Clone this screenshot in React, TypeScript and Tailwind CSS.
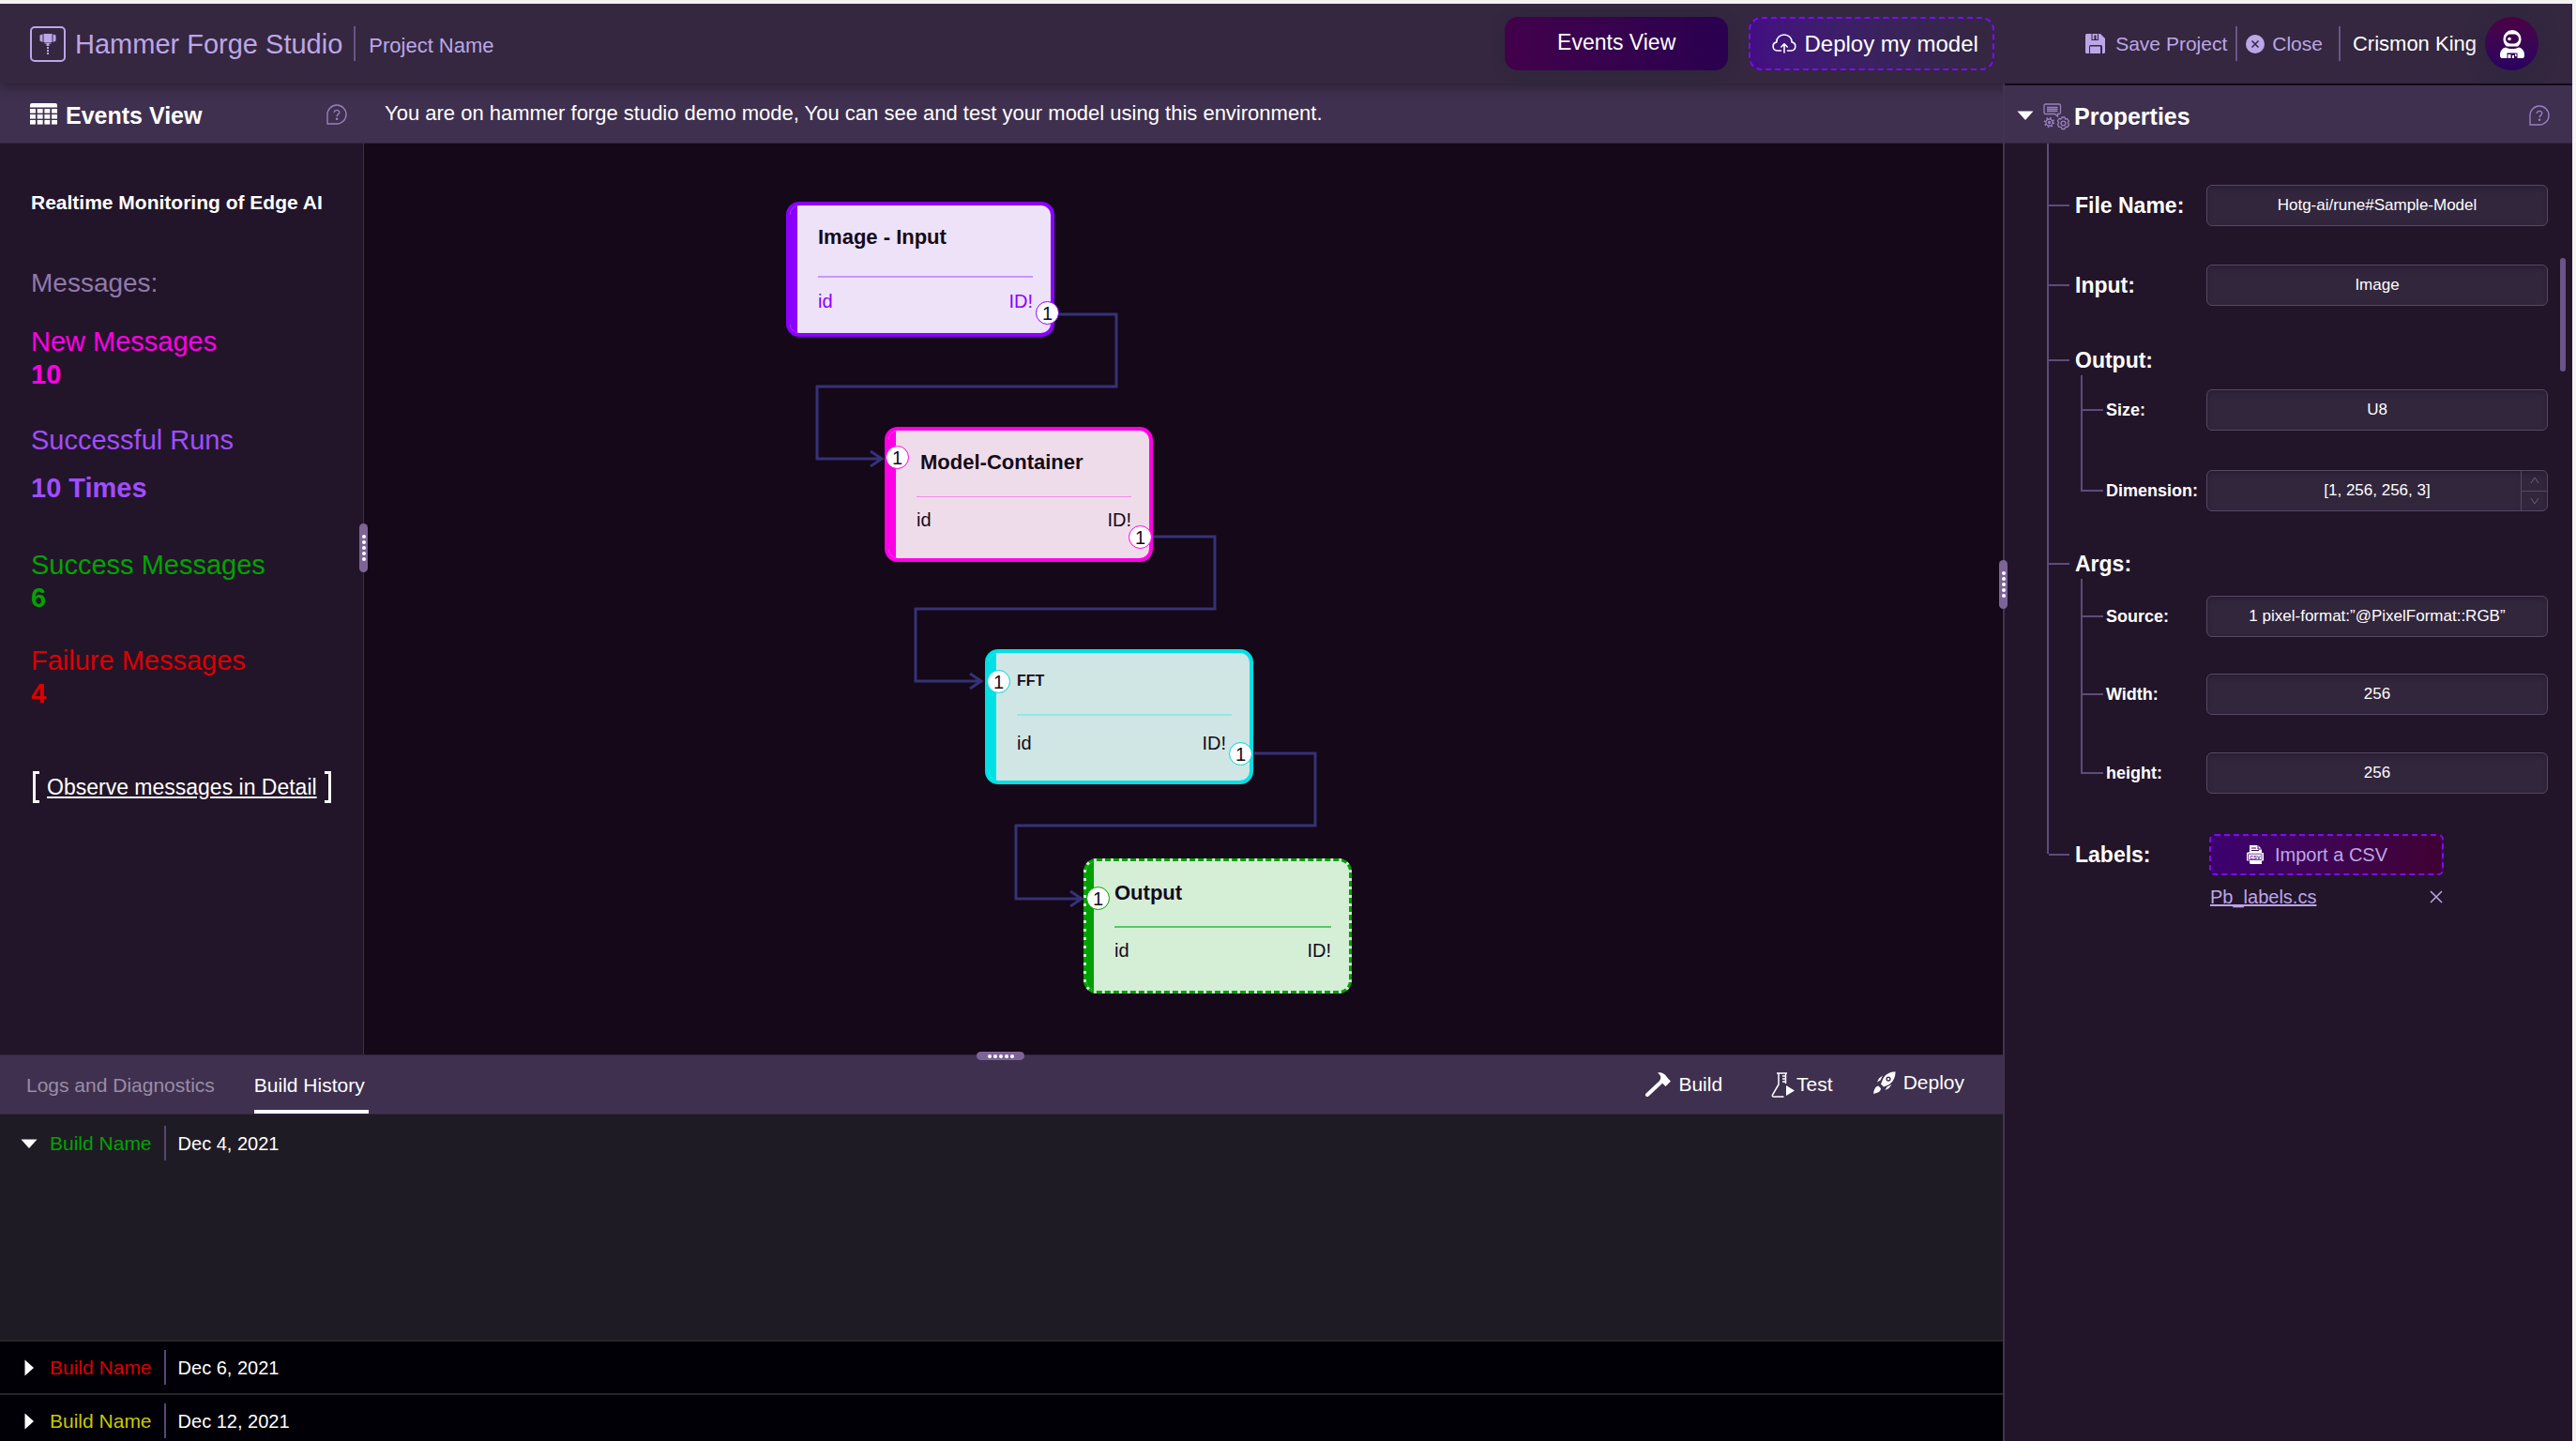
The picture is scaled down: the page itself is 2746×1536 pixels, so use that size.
import type { ReactNode } from 'react';
import clsx from 'clsx';

interface Stat {
  name: string;
  value: string;
  className: string;
  valueClass?: string;
}

const stats: Stat[] = [
  { name: 'New Messages', value: '10', className: 'mt-[28px] text-[#ff00e6]' },
  { name: 'Successful Runs', value: '10 Times', className: 'mt-[35px] text-[#a04dff]', valueClass: 'mt-4' },
  { name: 'Success Messages', value: '6', className: 'mt-[47px] text-[#00a300]' },
  { name: 'Failure Messages', value: '4', className: 'mt-[32px] text-[#dc0000]' },
];

interface FlowNode {
  title: string;
  position: string;
  card: string;
  band: string;
  header: string;
  line: string;
  row: string;
  ports: string[];
}

const nodes: FlowNode[] = [
  {
    title: 'Image - Input',
    position: 'left-[450px] top-[62px]',
    card: 'border-4 border-[#8c00ff] bg-[#ede2f8]',
    band: 'bg-[#8c00ff]',
    header: 'h-[75px] pt-5 text-[22px]',
    line: 'h-0.5 bg-[#c896ff]',
    row: 'mt-[11px] text-[#8c00ff]',
    ports: ['left-[266px] top-[106px] border-[#8c00ff]'],
  },
  {
    title: 'Model-Container',
    position: 'left-[555px] top-[302px]',
    card: 'border-4 border-[#ff00e6] bg-[#eedcea]',
    band: 'bg-[#ff00e6]',
    header: 'h-[70px] pt-5 pl-1 text-[22px]',
    line: 'h-px bg-[#f78be8]',
    row: 'mt-[10px]',
    ports: ['left-px top-5 border-[#ff00e6]', 'left-[260px] top-[105px] border-[#ff00e6]'],
  },
  {
    title: 'FFT',
    position: 'left-[662px] top-[539px]',
    card: 'border-4 border-[#00e1e6] bg-[#d0e6e4]',
    band: 'bg-[#00e1e6]',
    header: 'h-[65px] pt-4 text-[16px]',
    line: 'h-0.5 bg-[#8fe8e8]',
    row: 'mt-[15px] pr-1.5',
    ports: ['left-0.5 top-[22px] border-[#00d5da]', 'left-[260px] top-[99px] border-[#00d5da]'],
  },
  {
    title: 'Output',
    position: 'left-[767px] top-[762px]',
    card: 'border-3 border-dashed border-[#00a000] bg-[#d5eed6]',
    band: 'bg-[#00a000]',
    header: 'h-[69px] pt-5 text-[22px]',
    line: 'h-0.5 bg-[#5cc46c]',
    row: 'mt-[10px]',
    ports: ['left-[3px] top-[30px] border-[#00a000]'],
  },
];

const edges = [
  'M741 182H802V259H483V336H552M540 328L552 336L540 344',
  'M841 419H907V496H588V573H658M646 565L658 573L646 581',
  'M949 650H1014V727H695V805H765M753 797L765 805L753 813',
];

const builds = [
  { date: 'Dec 4, 2021', color: 'text-[#00a300]', open: true },
  { date: 'Dec 6, 2021', color: 'text-[#dc0000]', open: false },
  { date: 'Dec 12, 2021', color: 'text-[#c8c800]', open: false },
];

const LogoIcon = () => (
  <svg viewBox="0 0 38 38" className="size-[38px] shrink-0" fill="none" stroke="#bca6e8">
    <rect x="1" y="1" width="36" height="36" rx="4" strokeWidth="2" />
    <g fill="#bca6e8" stroke="none">
      <rect x="14.5" y="8" width="9" height="9" />
      <path d="M13.5 8.5v8.500l-3-1.500V9.500zM24.500 8.500v8.500l3-1.500V9.500z" />
      <path d="M15.500 17.500h7v1h-7zM17.500 18.500h3v2.500h-3zM18 22h2v2h-2zM18 25h2v2h-2zM18 28h2v2h-2z" />
    </g>
  </svg>
);

const GridIcon = () => (
  <svg viewBox="0 0 29 23" className="h-[23px] w-[29px] shrink-0" fill="#fff">
    <path d="M2 0h25a2 2 0 0 1 2 2v2.500H0V2a2 2 0 0 1 2-2z" />
    {[6, 12, 18].map((y) => [0, 7.7, 15.4, 23.1].map((x) => <rect key={`${x}-${y}`} x={x} y={y} width="5.9" height="4.6" />))}
  </svg>
);

const HelpButton = () => (
  <button type="button" aria-label="Help" className="ml-auto shrink-0">
    <svg viewBox="0 0 22 22" className="size-[22px]" fill="none" stroke="#9b7fc0" strokeWidth="1.4">
      <path d="M1 21V11A10 10 0 1 1 11 21z" strokeLinejoin="round" />
      <path d="M8.300 9c0-3.600 5.600-3.400 5.400 0c-.1 1.900-2.600 2-2.600 4.200" />
      <circle cx="11.1" cy="15.8" r=".6" fill="#9b7fc0" />
    </svg>
  </button>
);

const CloudIcon = () => (
  <svg viewBox="0 0 26 21" className="h-[21px] w-[26px]" fill="none" stroke="#fff" strokeWidth="1.6" strokeLinecap="round" strokeLinejoin="round">
    <path d="M9.500 18H5.500a4.600 4.600 0 0 1-.7-9.100C4.800 4.500 8.200 1 12.900 1s8.200 3.500 8.200 7.900A4.600 4.600 0 0 1 20.500 18h-4" />
    <path d="M13 20v-9M9.800 14L13 10.800L16.200 14" />
  </svg>
);

const SaveIcon = () => (
  <svg viewBox="0 0 21 21" className="size-[21px]" fill="#bca6e8">
    <path fillRule="evenodd" d="M1.500 0H6.500V7H14V0H16L21 5V19.500A1.500 1.500 0 0 1 19.500 21H18V13.500A1.500 1.500 0 0 0 16.500 12H5.500A1.500 1.500 0 0 0 4 13.500V21H1.500A1.500 1.500 0 0 1 0 19.500V1.500A1.500 1.500 0 0 1 1.500 0z" />
    <path d="M7.500 0H13V6H11.500V1.500H9.500V6H7.500zM5 13.500H16V21H5z" />
  </svg>
);

const CloseIcon = () => (
  <svg viewBox="0 0 20 20" className="size-5">
    <circle cx="10" cy="10" r="10" fill="#bca6e8" />
    <path d="M6.500 6.500l7 7M13.500 6.500l-7 7" stroke="#34273f" strokeWidth="1.5" />
  </svg>
);

const AvatarIcon = () => (
  <svg viewBox="0 0 26 30" className="h-[30px] w-[26px]" fill="#fff">
    <path fillRule="evenodd" d="M13 0a9.500 9.500 0 0 1 9.500 10c0 3-1.500 5.500-3.500 7.500H7C5 15.500 3.500 13 3.500 10A9.500 9.500 0 0 1 13 0zM11 4.500a5 5 0 1 0 0 10h4a5 5 0 1 0 0-10z" />
    <circle cx="10" cy="9.5" r="1.8" />
    <path d="M6 18.500c4 2 10 2 14 0c4 1 6 4 6 8c0 2-.5 3.500-2 3.500h-5.500v-5.500h-11V30H2c-1.500 0-2-1.500-2-3.500c0-4 2-7 6-8z" />
    <path d="M8.500 26h3v4h-3zM13 27h2v3h-2zM16 25.500h1.500V28H16z" />
  </svg>
);

const SettingsIcon = () => (
  <svg viewBox="0 0 29 29" className="size-[29px] shrink-0" fill="none" stroke="#9b7fc0" strokeWidth="1.3">
    <path d="M2.500 1H17a1.500 1.500 0 0 1 1.500 1.500v7.500a1.500 1.500 0 0 1-1.500 1.500h-1.500v2.500l-3-2.500h-10A1.500 1.500 0 0 1 1 10V2.500A1.500 1.500 0 0 1 2.500 1zM4 4.500h11.500M4 6.500h11.500M4 8.500h11.500" />
    <circle cx="6.5" cy="20.5" r="3.5" />
    <circle cx="6.5" cy="20.5" r="1" />
    <circle cx="6.5" cy="20.5" r="4.7" strokeWidth="2" strokeDasharray="1.5 2.2" />
    <path d="M20 15h3l.6 2l2.100-.4l1.700 2.600l-1.200 1.700l1.400 1.700l-1.500 2.800l-2.300-.2l-.8 2.300h-3l-.8-2.200l-2.300.1l-1.500-2.700l1.300-1.800l-1.300-1.800l1.600-2.600l2.300.4z" strokeLinejoin="round" />
    <circle cx="21.5" cy="21.5" r="2.4" />
  </svg>
);

const HammerIcon = () => (
  <svg viewBox="0 0 27 26" className="h-[26px] w-[27px]" fill="#fff">
    <path d="M2 24L16.500 10.500" stroke="#fff" strokeWidth="4" strokeLinecap="round" />
    <path d="M13 .5C17-.5 20.500 1.500 22.500 4.500L24 6.500L27 9.500L21.500 15L19 12.500L15 8.500C17 6.500 17 3 13 .5z" />
  </svg>
);

const FlaskIcon = () => (
  <svg viewBox="0 0 25 27" className="h-[27px] w-[25px]" fill="none" stroke="#fff" strokeWidth="1.5">
    <path d="M6 1h11M8 1v12L1.500 24c-.6 1.200 0 2 1.200 2H13.500M15.500 1v11M15 4h-3M15 7h-3M15 10h-3" />
    <path d="M16 14l9 5.500l-9 5.500z" fill="#fff" stroke="none" />
  </svg>
);

const RocketIcon = () => (
  <svg viewBox="0 0 24 24" className="size-6" fill="#fff">
    <path fillRule="evenodd" d="M23.500.3c-6 .2-10 2.500-13 7.200L8 13.500L11 16.500l6-2.500c4.500-3.500 6.500-7.500 6.500-13.700zM16 5.500a2.600 2.600 0 1 1 0 5.200a2.600 2.600 0 0 1 0-5.200z" />
    <circle cx="16" cy="8.1" r="1.2" />
    <path d="M10 4.500L6 7.500L4 11.500L7.500 9.500zM19.500 14l-3 4l-4 2l2-3.500zM5.500 15.500c-3 .2-4.500 3-5.500 8.300c5-.8 7.800-2.600 8-5.600z" />
  </svg>
);

const CsvIcon = () => (
  <svg viewBox="0 0 18 20" className="h-5 w-[18px]">
    <path d="M3 0H12L16 4V8H18V16.500H16V20H4A2 2 0 0 1 3 18.500V16.500H0V8L3 7z" fill="#fff" />
    <path d="M12 0V4H16M5 3h5M5 5.500h8" stroke="#45005f" strokeWidth="1" fill="none" />
    <rect x="1.5" y="9.2" width="14.5" height="6.3" rx=".5" fill="none" stroke="#5b1478" strokeWidth=".8" />
    <text x="9" y="14.500" textAnchor="middle" fontSize="5.500" fontWeight="700" fill="#5b1478">CSV</text>
  </svg>
);

const Caret = ({ open }: { open: boolean }) => (
  <svg viewBox="0 0 18 18" className="size-[18px] shrink-0" fill="#fff">
    <path d={open ? 'M.5 4.500h17L9 14z' : 'M4.500 .5v17L14 9z'} />
  </svg>
);

const Divider = () => <span className="h-[37px] w-0.5 shrink-0 bg-[#6b5488]" />;

const Dots = () => (
  <>
    {[0, 1, 2, 3, 4].map((i) => (
      <span key={i} className="size-1 rounded-full bg-white" />
    ))}
  </>
);

const Header = () => (
  <header className="relative z-10 flex h-[85px] shrink-0 items-center bg-[#34273f] pr-9 pl-8 text-[#bca6e8] shadow-[0_4px_10px_rgba(30,25,35,0.6)]">
    <LogoIcon />
    <h1 className="ml-2.5 pt-0.5 text-[29px]">Hammer Forge Studio</h1>
    <div className="ml-3 flex items-center gap-[14px]">
      <Divider />
      <span className="pt-1 text-[22px]">Project Name</span>
    </div>
    <button type="button" className="ml-auto h-[57px] w-[238px] rounded-[14px] bg-linear-to-r from-[#43004b] to-[#2a0050] pb-0.5 text-[23px] text-white shadow-[0_3px_12px_rgba(45,40,60,0.9)]">
      Events View
    </button>
    <button type="button" className="ml-[22px] flex h-[57px] w-[262px] items-center justify-center gap-2 rounded-[14px] border-2 border-dashed border-[#7d0cf5] bg-linear-to-r from-[#430e82] to-[#34273f] pl-2 text-[24px] text-white">
      <CloudIcon />
      Deploy my model
    </button>
    <div className="ml-[97px] flex items-center gap-[9px]">
      <button type="button" className="flex items-center gap-[11px] text-[21px]">
        <SaveIcon />
        Save Project
      </button>
      <Divider />
      <button type="button" className="flex items-center gap-2 pr-2 text-[21px]">
        <CloseIcon />
        Close
      </button>
      <Divider />
      <span className="ml-1 text-[22px] text-white">Crismon King</span>
      <button type="button" aria-label="Account" className="flex size-[57px] items-center justify-center rounded-full bg-linear-to-b from-[#4b0045] to-[#2a0060] shadow-[0_0_20px_rgba(45,40,65,1)]">
        <AvatarIcon />
      </button>
    </div>
  </header>
);

const PanelBar = ({ children, className }: { children: ReactNode; className?: string }) => (
  <div className={clsx('flex h-[64px] shrink-0 items-center border-b border-[#33243f] bg-[#3f304f] pt-0.5', className)}>{children}</div>
);

const Sidebar = () => (
  <aside className="relative flex w-[388px] shrink-0 flex-col border-r border-[#3d304b] bg-[#221529]">
    <PanelBar className="gap-[9px] pr-[17px] pl-8">
      <GridIcon />
      <h2 className="pt-1 text-[25px] font-bold">Events View</h2>
      <HelpButton />
    </PanelBar>
    <div className="flex flex-col pt-[48px] pl-[33px]">
      <h3 className="text-[21px] leading-[30px] font-bold">Realtime Monitoring of Edge AI</h3>
      <p className="mt-[54px] text-[28px] leading-[34px] text-[#9079ab]">Messages:</p>
      {stats.map((stat) => (
        <div key={stat.name} className={clsx('text-[29px]', stat.className)}>
          <p className="leading-[34px]">{stat.name}</p>
          <p className={clsx('leading-[36px] font-bold', stat.valueClass)}>{stat.value}</p>
        </div>
      ))}
      <p className="mt-[65px] flex items-center gap-2 pl-0.5 text-[23px] leading-[34px]">
        <span className="h-[34px] w-[7px] border-[3px] border-r-0 border-white" />
        <a href="#messages" className="underline underline-offset-2">Observe messages in Detail</a>
        <span className="h-[34px] w-[7px] border-[3px] border-l-0 border-white" />
      </p>
    </div>
    <div className="absolute top-[469px] -right-[5px] z-10 flex h-[52px] w-[9px] flex-col items-center justify-center gap-0.5 rounded-full bg-[#7d6496]">
      <Dots />
    </div>
  </aside>
);

const NodeCard = ({ node }: { node: FlowNode }) => (
  <article className={clsx('absolute h-[144px] w-[286px] text-[#150a1a]', node.position)}>
    <div className={clsx('flex h-full overflow-hidden rounded-[14px]', node.card)}>
      <span className={clsx('w-2 shrink-0', node.band)} />
      <div className="flex-1 pr-[19px] pl-[22px]">
        <h3 className={clsx('leading-[28px] font-bold', node.header)}>{node.title}</h3>
        <div className={node.line} />
        <div className={clsx('flex justify-between text-[20px] leading-[28px]', node.row)}>
          <span>id</span>
          <span>ID!</span>
        </div>
      </div>
    </div>
    {node.ports.map((port) => (
      <span key={port} className={clsx('absolute flex size-[25px] items-center justify-center rounded-full border bg-white text-[20px]', port)}>
        1
      </span>
    ))}
  </article>
);

const Canvas = () => (
  <main className="flex min-w-0 flex-1 flex-col bg-[#140819]">
    <PanelBar className="pb-0.5 pl-[22px] text-[22px]">
      You are on hammer forge studio demo mode, You can see and test your model using this environment.
    </PanelBar>
    <div className="relative flex-1 overflow-hidden">
      <svg className="absolute inset-0 size-full" fill="none" stroke="#353277" strokeWidth="3">
        {edges.map((d) => (
          <path key={d} d={d} />
        ))}
      </svg>
      {nodes.map((node) => (
        <NodeCard key={node.title} node={node} />
      ))}
    </div>
  </main>
);

const BuildPanel = () => (
  <section className="relative h-[412px] shrink-0 bg-[#010007]">
    <div className="absolute -top-[3px] left-[1041px] z-10 flex h-[9px] w-[51px] items-center justify-center gap-0.5 rounded-full bg-[#7d6496]">
      <Dots />
    </div>
    <div className="flex h-[64px] items-center border-y border-[#33243f] bg-[#3f304f] pr-[41px] pl-7 text-[21px]">
      <button type="button" className="pt-0.5 text-[#9a8ca6]">Logs and Diagnostics</button>
      <button type="button" className="ml-[42px] h-full border-y-4 border-t-transparent border-b-white pt-0.5 pr-1">Build History</button>
      <div className="ml-auto flex items-center text-[21px]">
        <button type="button" className="flex items-center gap-2">
          <HammerIcon />
          Build
        </button>
        <button type="button" className="ml-[52px] flex items-center gap-0.5">
          <FlaskIcon />
          Test
        </button>
        <button type="button" className="ml-[43px] flex items-center gap-2 pb-1">
          <RocketIcon />
          Deploy
        </button>
      </div>
    </div>
    <div className="h-[348px] overflow-hidden">
      {builds.map((build) => (
        <div key={build.date} className={clsx('border-b-2 border-[#27242c]', build.open ? 'h-[242px] bg-[#1f1b24] pt-3' : 'py-[9px]')}>
          <button type="button" aria-expanded={build.open} className="flex items-center pl-[22px]">
            <Caret open={build.open} />
            <span className={clsx('ml-[13px] text-[21px] leading-[37px]', build.color)}>Build Name</span>
            <span className="mx-[13px]">
              <span className="block h-[37px] w-0.5 bg-[#5a4675]" />
            </span>
            <span className="text-[20px]">{build.date}</span>
          </button>
        </div>
      ))}
    </div>
  </section>
);

const Chevron = ({ d }: { d: string }) => (
  <svg viewBox="0 0 10 8" className="h-2 w-2.5" fill="none" stroke="#6b5f78" strokeWidth="1">
    <path d={d} />
  </svg>
);

interface FieldProps {
  id: string;
  label: string;
  value: string;
  sub?: boolean;
  stepper?: boolean;
  className?: string;
}

const Field = ({ id, label, value, sub, stepper, className }: FieldProps) => (
  <div className={clsx('flex h-11 items-center', className)}>
    <span className="h-0.5 w-[22px] shrink-0 bg-[#5f4a7c]" />
    <label htmlFor={id} className={clsx('shrink-0 font-bold', sub ? 'w-[110px] pl-[3px] text-[18px]' : 'w-[146px] pl-1.5 text-[23px]')}>
      {label}
    </label>
    <div className="flex h-full min-w-0 flex-1 overflow-hidden rounded-md border border-[#554863] bg-[#32263d] shadow-[inset_0_3px_5px_rgba(40,28,50,0.8)]">
      <input id={id} defaultValue={value} className={clsx('w-full min-w-0 bg-transparent text-center text-[17px] outline-none', stepper && 'pl-7')} />
      {stepper && (
        <div className="flex w-7 shrink-0 flex-col border-l border-[#554863]">
          <button type="button" aria-label="Increase" className="flex flex-1 items-center justify-center border-b border-[#554863]">
            <Chevron d="M1 7L5 1L9 7" />
          </button>
          <button type="button" aria-label="Decrease" className="flex flex-1 items-center justify-center">
            <Chevron d="M1 1L5 7L9 1" />
          </button>
        </div>
      )}
    </div>
  </div>
);

const GroupLabel = ({ children, className }: { children: ReactNode; className?: string }) => (
  <div className={clsx('flex h-8 items-center', className)}>
    <span className="h-0.5 w-[22px] bg-[#5f4a7c]" />
    <h3 className="pl-1.5 text-[23px] font-bold">{children}</h3>
  </div>
);

const SubTree = ({ children }: { children: ReactNode }) => (
  <div className="flex pl-[34px]">
    <span className="mb-[21px] w-0.5 shrink-0 bg-[#5f4a7c]" />
    <div className="min-w-0 flex-1">{children}</div>
  </div>
);

const Properties = () => (
  <aside className="relative z-20 flex w-[607px] shrink-0 flex-col border-l-2 border-[#42344f] bg-[#221529]">
    <PanelBar className="border-t-2 border-t-[#120a18] pr-6 pl-[13px]">
      <Caret open />
      <span className="ml-2.5 pt-1">
        <SettingsIcon />
      </span>
      <h2 className="ml-1 pt-1 text-[25px] font-bold">Properties</h2>
      <HelpButton />
    </PanelBar>
    <div className="flex pr-[26px] pl-[45px]">
      <span className="mb-[61px] w-0.5 shrink-0 bg-[#5f4a7c]" />
      <div className="min-w-0 flex-1 pt-11">
        <Field id="file-name" label="File Name:" value="Hotg-ai/rune#Sample-Model" />
        <Field id="input" label="Input:" value="Image" className="mt-[41px]" />
        <GroupLabel className="mt-[42px]">Output:</GroupLabel>
        <SubTree>
          <Field id="size" label="Size:" value="U8" sub className="mt-[15px]" />
          <Field id="dimension" label="Dimension:" value="[1, 256, 256, 3]" sub stepper className="mt-[42px]" />
        </SubTree>
        <GroupLabel className="mt-[40px]">Args:</GroupLabel>
        <SubTree>
          <Field id="source" label="Source:" value="1 pixel-format:”@PixelFormat::RGB”" sub className="mt-[18px]" />
          <Field id="width" label="Width:" value="256" sub className="mt-[39px]" />
          <Field id="height" label="height:" value="256" sub className="mt-[40px]" />
        </SubTree>
        <div className="mt-[43px] flex items-center">
          <span className="h-0.5 w-[22px] bg-[#5f4a7c]" />
          <h3 className="w-[149px] pl-1.5 text-[23px] font-bold">Labels:</h3>
          <button type="button" className="flex h-11 w-[250px] items-center justify-center gap-3 rounded-md border-2 border-dashed border-[#7d0cf5] bg-linear-to-r from-[#3d0070] to-[#400033] pr-5 text-[20px] text-[#bca6e8]">
            <CsvIcon />
            Import a CSV
          </button>
        </div>
        <div className="mt-2 ml-[172px] flex w-[248px] items-center justify-between text-[20px] leading-[30px] text-[#bca6e8]">
          <a href="#labels" className="underline">Pb_labels.cs</a>
          <button type="button" aria-label="Remove file">
            <svg viewBox="0 0 14 14" className="size-3.5" stroke="#bca6e8" strokeWidth="1.5">
              <path d="M1 1l12 12M13 1L1 13" />
            </svg>
          </button>
        </div>
      </div>
    </div>
    <div className="absolute top-[186px] right-[7px] h-[121px] w-1.5 rounded-full bg-[#6b5488]" />
    <div className="absolute top-[508px] -left-1.5 flex h-[52px] w-[9px] flex-col items-center justify-center gap-0.5 rounded-full bg-[#7d6496]">
      <Dots />
    </div>
  </aside>
);

export default function App() {
  return (
    <div className="h-screen bg-[#f4f2f3] pt-1 pr-1 font-['Liberation_Sans',Arial,sans-serif] text-white">
      <div className="flex h-full flex-col overflow-hidden">
        <Header />
        <div className="flex min-h-0 flex-1">
          <div className="flex min-w-0 flex-1 flex-col">
            <div className="flex min-h-0 flex-1">
              <Sidebar />
              <Canvas />
            </div>
            <BuildPanel />
          </div>
          <Properties />
        </div>
      </div>
    </div>
  );
}
